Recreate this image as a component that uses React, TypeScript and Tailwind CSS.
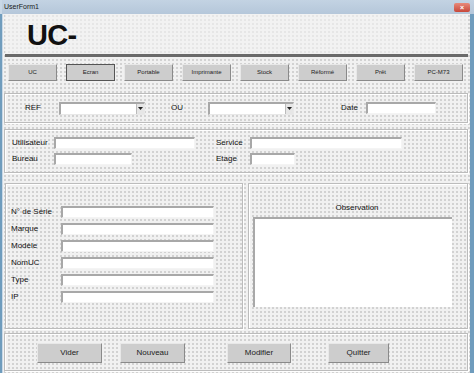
import React from "react";

const dots =
  "bg-[#f1f1f1] bg-[radial-gradient(#d2d2d2_0.8px,transparent_0.9px)] bg-[length:4px_4px]";

const Btn = ({ label, w, focus }: { label: string; w: string; focus?: boolean }) => (
  <div
    className={`${w} flex items-center justify-center bg-[#cdcdcd] text-[#222] ${
      focus
        ? "border border-[#555]"
        : "border border-t-[#e8e8e8] border-l-[#e8e8e8] border-b-[#8a8a8a] border-r-[#8a8a8a]"
    }`}
  >
    {label}
  </div>
);

const Box = ({ w, h = "h-[12px]" }: { w: string; h?: string }) => (
  <div
    className={`${w} ${h} bg-white border-t-2 border-l-2 border-t-[#a8a8a8] border-l-[#a8a8a8] border-b border-r border-b-[#f4f4f4] border-r-[#f4f4f4]`}
  />
);

const Combo = ({ w }: { w: string }) => (
  <div
    className={`${w} h-[13px] bg-white border-t-2 border-l-2 border-t-[#a8a8a8] border-l-[#a8a8a8] border-b border-r border-b-[#e8e8e8] border-r-[#e8e8e8] flex justify-end`}
  >
    <div className="w-[8px] h-full bg-[#e6e6e6] border-l border-[#bbb] flex items-center justify-center">
      <svg width="5" height="3" viewBox="0 0 5 3">
        <path d="M0 0h5L2.5 3z" fill="#222" />
      </svg>
    </div>
  </div>
);

const Frame = ({ className, children }: { className: string; children?: React.ReactNode }) => (
  <div className={`border border-[#bcbcbc] shadow-[inset_1px_1px_0_#fff,1px_1px_0_#fff] ${className}`}>
    {children}
  </div>
);

export default function App() {
  const topButtons = ["UC", "Ecran", "Portable", "Imprimante", "Stock", "Réformé", "Prêt", "PC-M73"];
  const fields = ["N° de Série", "Marque", "Modèle", "NomUC", "Type", "IP"];
  return (
    <div
      className="w-[474px] h-[373px] overflow-hidden flex flex-col bg-[#6f9cbd] text-[8px] text-[#111]"
      style={{ fontFamily: '"Liberation Sans", Arial, sans-serif' }}
    >
      {/* title bar */}
      <div className="h-[14px] shrink-0 flex items-center justify-between bg-[linear-gradient(#c3d3e3,#b5c7da)] pl-[2px] pr-[4px] border-l-2 border-[#c9d8e6]">
        <span className="text-[7px] text-[#1a1a1a]">UserForm1</span>
        <div className="w-[16px] h-[9px] rounded-[2px] bg-[linear-gradient(#e88a7a,#c7473a)] flex items-center justify-center text-white text-[7px] leading-none font-bold">
          ×
        </div>
      </div>

      <div className={`flex-1 flex flex-col ${dots} ml-[2px] mr-[4px] border-l border-[#c9d8e6]`}>
        {/* header */}
        <div className="h-[43px] shrink-0 mx-[2px] border-b-[3px] border-[#6a6a6a] flex items-center pl-[22px] bg-[#f3f3f3]/60">
          <span className="text-[29px] font-bold tracking-tight leading-none mt-[3px]">UC-</span>
        </div>

        {/* category buttons */}
        <div className="mt-[7px] h-[17px] flex gap-[9px] pl-[5px] text-[6px]">
          {topButtons.map((b) => (
            <Btn key={b} label={b} w="w-[49px]" focus={b === "Ecran"} />
          ))}
        </div>

        {/* REF row */}
        <Frame className="mt-[12px] ml-[1px] w-[464px] h-[30px] flex items-center">
          <span className="ml-[20px] w-[34px]">REF</span>
          <Combo w="w-[86px]" />
          <span className="ml-[26px] w-[37px]">OU</span>
          <Combo w="w-[86px]" />
          <span className="ml-[47px] w-[25px]">Date</span>
          <Box w="w-[70px]" />
        </Frame>

        {/* user row */}
        <Frame className="mt-[6px] ml-[1px] w-[464px] h-[44px] flex flex-col justify-center gap-[4px]">
          <div className="flex items-center">
            <span className="ml-[7px] w-[42px]">Utilisateur</span>
            <Box w="w-[141px]" />
            <span className="ml-[21px] w-[34px]">Service</span>
            <Box w="w-[152px]" />
          </div>
          <div className="flex items-center">
            <span className="ml-[7px] w-[42px]">Bureau</span>
            <Box w="w-[78px]" />
            <span className="ml-[84px] w-[34px]">Etage</span>
            <Box w="w-[45px]" />
          </div>
        </Frame>

        {/* detail frames */}
        <div className="mt-[10px] flex gap-[5px] pl-[2px]">
          <Frame className="w-[238px] h-[146px] flex flex-col pt-[22px] gap-[5px]">
            {fields.map((f) => (
              <div key={f} className="flex items-center">
                <span className="ml-[5px] w-[50px]">{f}</span>
                <Box w="w-[153px]" />
              </div>
            ))}
          </Frame>
          <Frame className="w-[220px] h-[146px] flex flex-col items-center pt-[18px]">
            <span className="ml-[-2px]">Observation</span>
            <div className="mt-[3px] mr-[11px] w-[199px] h-[90px] bg-white border-t-2 border-l-2 border-t-[#a8a8a8] border-l-[#a8a8a8]" />
          </Frame>
        </div>

        {/* bottom buttons */}
        <Frame className="mt-[4px] ml-[1px] mb-[2px] w-[464px] flex-1 flex items-start pt-[9px]">
          <div className="flex h-[20px] text-[8px]">
            <div className="ml-[32px]"><Btn label="Vider" w="w-[65px] h-[20px]" /></div>
            <div className="ml-[18px]"><Btn label="Nouveau" w="w-[65px] h-[20px]" /></div>
            <div className="ml-[42px]"><Btn label="Modifier" w="w-[64px] h-[20px]" /></div>
            <div className="ml-[37px]"><Btn label="Quitter" w="w-[61px] h-[20px]" /></div>
          </div>
        </Frame>
      </div>
    </div>
  );
}
